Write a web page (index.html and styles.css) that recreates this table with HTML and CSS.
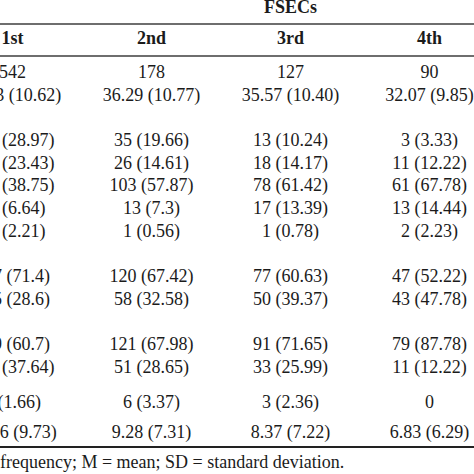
FILE: index.html
```html
<!DOCTYPE html>
<html lang="en">
<head>
<meta charset="utf-8">
<title>FSECs table</title>
<link rel="stylesheet" href="styles.css">
</head>
<body>
<div class="sheet">
  <div class="table">
    <div class="title"><span class="group">FSECs</span></div>
    <div class="head">
      <span>1st</span><span>2nd</span><span>3rd</span><span>4th</span>
    </div>
    <div class="body">
      <div class="row"><span>542</span><span>178</span><span>127</span><span>90</span></div>
      <div class="row"><span>34.83 (10.62)</span><span>36.29 (10.77)</span><span>35.57 (10.40)</span><span>32.07 (9.85)</span></div>
      <div class="row"></div>
      <div class="row"><span>157 (28.97)</span><span>35 (19.66)</span><span>13 (10.24)</span><span>3 (3.33)</span></div>
      <div class="row"><span>127 (23.43)</span><span>26 (14.61)</span><span>18 (14.17)</span><span>11 (12.22)</span></div>
      <div class="row"><span>210 (38.75)</span><span>103 (57.87)</span><span>78 (61.42)</span><span>61 (67.78)</span></div>
      <div class="row"><span>36 (6.64)</span><span>13 (7.3)</span><span>17 (13.39)</span><span>13 (14.44)</span></div>
      <div class="row"><span>12 (2.21)</span><span>1 (0.56)</span><span>1 (0.78)</span><span>2 (2.23)</span></div>
      <div class="row"></div>
      <div class="row"><span>387 (71.4)</span><span>120 (67.42)</span><span>77 (60.63)</span><span>47 (52.22)</span></div>
      <div class="row"><span>155 (28.6)</span><span>58 (32.58)</span><span>50 (39.37)</span><span>43 (47.78)</span></div>
      <div class="row"></div>
      <div class="row"><span>329 (60.7)</span><span>121 (67.98)</span><span>91 (71.65)</span><span>79 (87.78)</span></div>
      <div class="row"><span>204 (37.64)</span><span>51 (28.65)</span><span>33 (25.99)</span><span>11 (12.22)</span></div>
      <div class="row spaced"><span>9 (1.66)</span><span>6 (3.37)</span><span>3 (2.36)</span><span>0</span></div>
      <div class="row spaced-sm last"><span>10.26 (9.73)</span><span>9.28 (7.31)</span><span>8.37 (7.22)</span><span>6.83 (6.29)</span></div>
    </div>
  </div>
  <p class="note">frequency; M = mean; SD = standard deviation.</p>
</div>
</body>
</html>
```
FILE: styles.css
```css
html, body {
  margin: 0;
  padding: 0;
  background: #ffffff;
}

.sheet {
  width: 474px;
  height: 474px;
  overflow: hidden;
  font-family: "Liberation Serif", "Times New Roman", serif;
  font-size: 18px;
  color: #1b1b1b;
}

.table {
  width: 556px;
  margin-left: -57px;
}

.title,
.head,
.row {
  display: grid;
  grid-template-columns: repeat(4, 139px);
  text-align: center;
  white-space: nowrap;
}

.title {
  height: 23px;
  line-height: 14px;
  font-weight: bold;
}

.group {
  grid-column: 2 / 5;
}

.head {
  height: 30px;
  line-height: 27px;
  font-weight: bold;
  border-top: 2px solid #6e6e6e;
  border-bottom: 2px solid #6e6e6e;
}

.body {
  padding-top: 4px;
  padding-bottom: 2px;
  border-bottom: 2px solid #222222;
}

.row {
  height: 22.7px;
  line-height: 22.7px;
}

.row.spaced {
  margin-top: 12px;
}

.row.spaced-sm {
  margin-top: 8px;
}

.note {
  margin: 0;
  padding-top: 4px;
  line-height: 20px;
  white-space: nowrap;
}
```
